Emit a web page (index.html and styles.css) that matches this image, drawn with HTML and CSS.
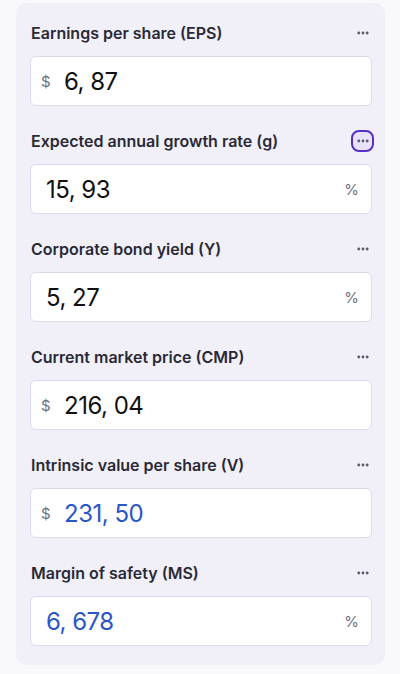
FILE: index.html
```html
<!DOCTYPE html>
<html lang="en">
<head>
  <meta charset="UTF-8">
  <meta name="viewport" content="width=device-width, initial-scale=1.0">
  <title>Graham Formula</title>
  <link rel="stylesheet" href="styles.css">
</head>
<body>
  <div class="calc-card">
    <div class="field">
      <div class="field-head">
        <span class="field-label">Earnings per share (EPS)</span>
        <button class="more-btn"><svg width="12" height="4" viewBox="0 0 12 4"><circle cx="1.8" cy="2" r="1.4"/><circle cx="6" cy="2" r="1.4"/><circle cx="10.2" cy="2" r="1.4"/></svg></button>
      </div>
      <div class="field-box">
        <span class="unit">$</span>
        <span class="value">6, 87</span>
      </div>
    </div>

    <div class="field">
      <div class="field-head">
        <span class="field-label">Expected annual growth rate (g)</span>
        <button class="more-btn active"><svg width="12" height="4" viewBox="0 0 12 4"><circle cx="1.8" cy="2" r="1.4"/><circle cx="6" cy="2" r="1.4"/><circle cx="10.2" cy="2" r="1.4"/></svg></button>
      </div>
      <div class="field-box">
        <span class="value no-unit">15, 93</span>
        <span class="unit right">%</span>
      </div>
    </div>

    <div class="field">
      <div class="field-head">
        <span class="field-label">Corporate bond yield (Y)</span>
        <button class="more-btn"><svg width="12" height="4" viewBox="0 0 12 4"><circle cx="1.8" cy="2" r="1.4"/><circle cx="6" cy="2" r="1.4"/><circle cx="10.2" cy="2" r="1.4"/></svg></button>
      </div>
      <div class="field-box">
        <span class="value no-unit">5, 27</span>
        <span class="unit right">%</span>
      </div>
    </div>

    <div class="field">
      <div class="field-head">
        <span class="field-label">Current market price (CMP)</span>
        <button class="more-btn"><svg width="12" height="4" viewBox="0 0 12 4"><circle cx="1.8" cy="2" r="1.4"/><circle cx="6" cy="2" r="1.4"/><circle cx="10.2" cy="2" r="1.4"/></svg></button>
      </div>
      <div class="field-box">
        <span class="unit">$</span>
        <span class="value">216, 04</span>
      </div>
    </div>

    <div class="field">
      <div class="field-head">
        <span class="field-label">Intrinsic value per share (V)</span>
        <button class="more-btn"><svg width="12" height="4" viewBox="0 0 12 4"><circle cx="1.8" cy="2" r="1.4"/><circle cx="6" cy="2" r="1.4"/><circle cx="10.2" cy="2" r="1.4"/></svg></button>
      </div>
      <div class="field-box">
        <span class="unit">$</span>
        <span class="value result">231, 50</span>
      </div>
    </div>

    <div class="field">
      <div class="field-head">
        <span class="field-label">Margin of safety (MS)</span>
        <button class="more-btn"><svg width="12" height="4" viewBox="0 0 12 4"><circle cx="1.8" cy="2" r="1.4"/><circle cx="6" cy="2" r="1.4"/><circle cx="10.2" cy="2" r="1.4"/></svg></button>
      </div>
      <div class="field-box">
        <span class="value no-unit result">6, 678</span>
        <span class="unit right">%</span>
      </div>
    </div>
  </div>
</body>
</html>
```

FILE: styles.css
```css
/* Page */
body {
  margin: 0;
  background: #f9f9fb;
  font-family: Inter, "Noto Sans", sans-serif;
  color: #25252f;
}

/* Calculator card */
.calc-card {
  background: #f1f0f8;
  margin: 3px 15px 9px 16px;
  padding: 19px 13px 19px 14px;
  border-radius: 10px;
}

.field {
  margin-bottom: 24px;
}

.field:last-child {
  margin-bottom: 0;
}

.field-head {
  display: flex;
  align-items: center;
  justify-content: space-between;
  height: 22px;
  margin-bottom: 12px;
}

.field-label {
  font-size: 16px;
  font-weight: 600;
  color: #2a2a36;
  padding-left: 1px;
}

/* The little "..." button */
.more-btn {
  width: 23px;
  height: 22px;
  margin-right: -2px;
  padding: 0;
  border: 2px solid transparent;
  border-radius: 8px;
  background: none;
  fill: #5a5a6c;
  display: flex;
  align-items: center;
  justify-content: center;
}

.more-btn.active {
  border-color: #5630c4;
  background: #e9e2fb;
}

/* Input-like boxes */
.field-box {
  display: flex;
  align-items: center;
  height: 50px;
  box-sizing: border-box;
  background: #fff;
  border: 1px solid #dcdaee;
  border-radius: 6px;
  padding: 0 12px 0 10px;
}

.unit {
  font-size: 15px;
  color: #70707c;
  width: 23px;
}

.unit.right {
  margin-left: auto;
  width: auto;
}

.value {
  font-size: 24px;
  letter-spacing: -0.5px;
  color: #111;
}

.value.no-unit {
  padding-left: 5px;
}

.value.result {
  color: #2a56c6;
}
```
